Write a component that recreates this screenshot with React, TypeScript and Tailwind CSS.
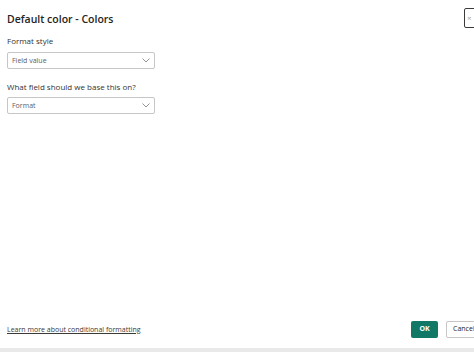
import React from 'react';

const Chevron = () => (
  <svg width="8" height="5" viewBox="0 0 8 5" fill="none" className="text-[#8a8886]">
    <path d="M0.5 0.5 L4 4 L7.5 0.5" stroke="currentColor" strokeWidth="0.9" />
  </svg>
);

const Select = ({ value }: { value: string }) => (
  <div className="flex h-[17px] w-[148px] items-center justify-between rounded-[2px] border border-[#c8c6c4] bg-white pl-[4px] pr-[4px]">
    <span className="text-[7px] leading-[9px] text-[#605e5c]">{value}</span>
    <Chevron />
  </div>
);

export default function App() {
  return (
    <div className="relative flex h-[352px] w-[474px] flex-col overflow-hidden bg-white font-['Open_Sans',sans-serif] text-[#252423]">
      <div className="absolute right-[-6px] top-[8px] flex h-[20px] w-[16px] items-center justify-start rounded-[2px] border-[1.5px] border-[#3b3a39] pl-[2px] text-[8px] text-[#a19f9d]">
        ×
      </div>
      <div className="flex flex-1 flex-col px-[7px]">
        <h1 className="pt-[12px] text-[10.5px] font-semibold leading-[14px] text-[#252423]">Default color - Colors</h1>

        <div className="mt-[9px] text-[8px] leading-[11px] text-[#333]">Format style</div>
        <div className="mt-[6px]">
          <Select value="Field value" />
        </div>

        <div className="mt-[12px] text-[8px] leading-[11px] text-[#333]">What field should we base this on?</div>
        <div className="mt-[5px]">
          <Select value="Format" />
        </div>

        <div className="mt-auto flex items-center justify-between pb-[10px]">
          <a href="#" className="text-[7px] leading-[10px] text-[#3b3a39] underline">
            Learn more about conditional formatting
          </a>
          <div className="mr-[-19px] flex items-center gap-[8px]">
            <button className="h-[17px] w-[27px] rounded-[2px] bg-[#117865] text-[7px] font-bold text-white">OK</button>
            <button className="h-[17px] w-[40px] rounded-[2px] border border-[#c8c6c4] bg-white pl-[6px] text-left text-[7px] text-[#252423]">
              Cancel
            </button>
          </div>
        </div>
      </div>
      <div className="h-[4px] bg-[#e9e9e9]" />
    </div>
  );
}
